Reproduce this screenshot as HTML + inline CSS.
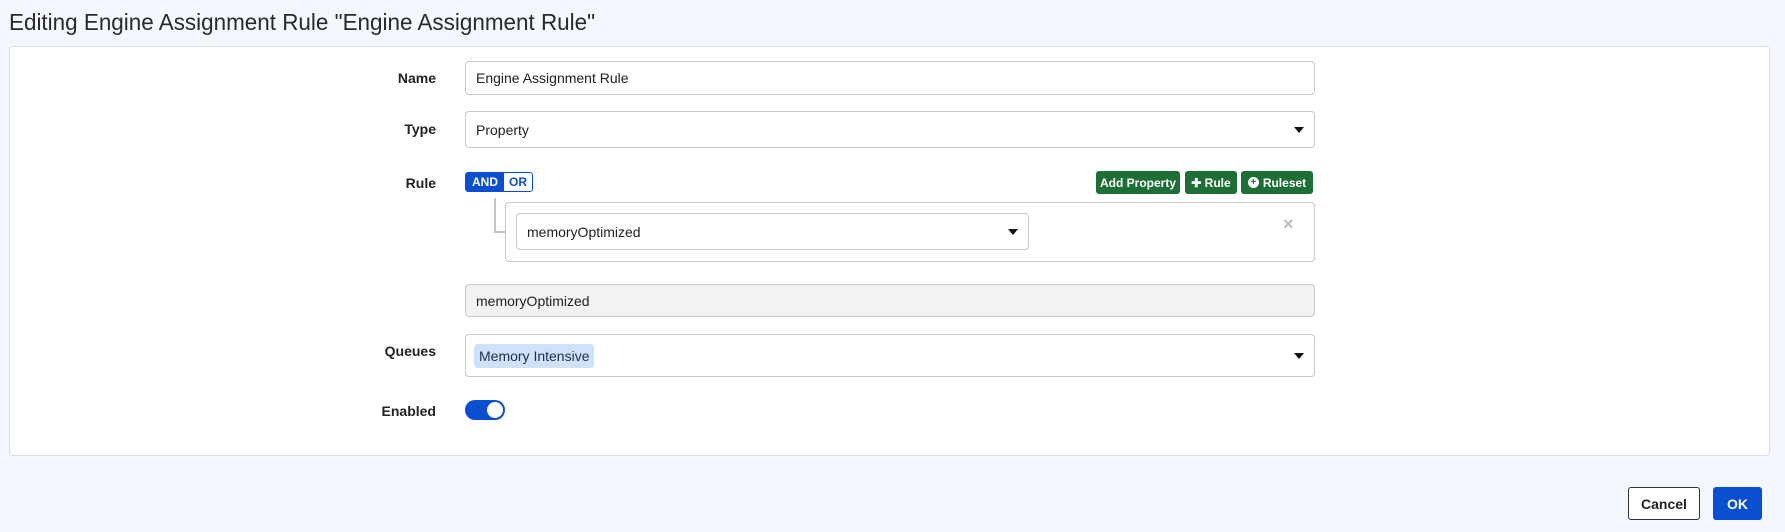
<!DOCTYPE html>
<html><head><meta charset="utf-8"><style>
*{box-sizing:border-box;margin:0;padding:0}
body{width:1785px;height:532px;background:#f4f7fd;font-family:"Liberation Sans",sans-serif;position:relative;overflow:hidden;color:#222}
.a{position:absolute}
.title{left:9px;top:9px;font-size:23.5px;color:#2a2a2a;white-space:nowrap;transform:scaleX(0.955);transform-origin:left}
.card{left:9px;top:46px;width:1761px;height:410px;background:#fff;border:1px solid #dcdfe4;border-radius:4px}
.lbl{font-size:14px;font-weight:bold;text-align:right;width:200px;left:236px;color:#222}
.inp{border:1px solid #c8c8c8;border-radius:4px;background:#fff;font-size:14px;padding-left:10px;display:flex;align-items:center;color:#222}
.arr{position:absolute;right:10px;top:50%;margin-top:-3px;width:0;height:0;border-left:5px solid transparent;border-right:5px solid transparent;border-top:6px solid #111}
.gb{background:#1d6f36;color:#fff;font-size:12px;font-weight:bold;border-radius:3px;display:flex;align-items:center;justify-content:center;top:171px;height:23px}
.btn{font-size:14px;font-weight:bold;border-radius:3px;display:flex;align-items:center;justify-content:center}
</style></head><body>
<div class="a title">Editing Engine Assignment Rule "Engine Assignment Rule"</div>
<div class="a card"></div>

<div class="a lbl" style="top:70px">Name</div>
<div class="a inp" style="left:465px;top:61px;width:850px;height:34px">Engine Assignment Rule</div>

<div class="a lbl" style="top:121px">Type</div>
<div class="a inp" style="left:465px;top:111px;width:850px;height:37px">Property<span class="arr"></span></div>

<div class="a lbl" style="top:175px">Rule</div>
<div class="a" style="left:465px;top:172px;width:68px;height:20px;border:1px solid #0a4fd0;border-radius:3px;overflow:hidden;display:flex;font-size:12px;font-weight:bold">
<div style="width:38px;background:#0a4fd0;color:#fff;display:flex;align-items:center;justify-content:center">AND</div>
<div style="flex:1;color:#0a4fd0;display:flex;align-items:center;justify-content:center">OR</div></div>
<div class="a gb" style="left:1096px;width:84px">Add Property</div>
<div class="a gb" style="left:1185px;width:52px">✚ Rule</div>
<div class="a gb" style="left:1241px;width:72px"><span style="display:inline-flex;width:11px;height:11px;border-radius:50%;background:#fff;color:#1d6f36;font-size:10px;align-items:center;justify-content:center;margin-right:4px;line-height:1">+</span>Ruleset</div>

<div class="a" style="left:494px;top:198px;width:12px;height:35px;border-left:2px solid #c4c4c4;border-bottom:2px solid #c4c4c4"></div>
<div class="a" style="left:505px;top:202px;width:810px;height:60px;border:1px solid #c8c8c8;border-radius:4px"></div>
<div class="a inp" style="left:516px;top:213px;width:513px;height:37px">memoryOptimized<span class="arr"></span></div>
<div class="a" style="left:1283px;top:214px;font-size:18px;font-weight:bold;color:#bbb">×</div>

<div class="a inp" style="left:465px;top:284px;width:850px;height:33px;background:#f2f2f2">memoryOptimized</div>

<div class="a lbl" style="top:343px">Queues</div>
<div class="a inp" style="left:465px;top:334px;width:850px;height:43px;padding-left:8px"><span style="background:#cfe2fc;color:#1c2f55;border-radius:3px;padding:4px 5px;font-size:14px">Memory Intensive</span><span class="arr"></span></div>

<div class="a lbl" style="top:403px">Enabled</div>
<div class="a" style="left:465px;top:400px;width:40px;height:20px;border-radius:10px;background:#0a4fd0"><div style="position:absolute;right:2px;top:2px;width:16px;height:16px;border-radius:50%;background:#fff"></div></div>

<div class="a btn" style="left:1628px;top:487px;width:72px;height:33px;border:1px solid #333;background:#fff;color:#222">Cancel</div>
<div class="a btn" style="left:1713px;top:487px;width:49px;height:33px;background:#0a4fd0;color:#fff">OK</div>
</body></html>
